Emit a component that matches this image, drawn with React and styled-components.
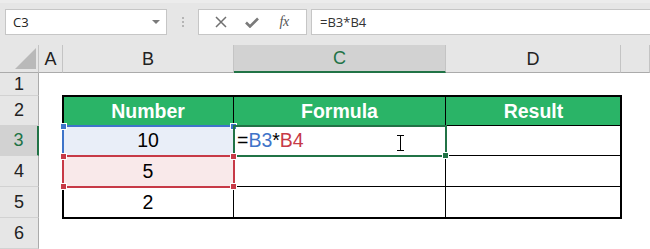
import React from "react";
import styled, { createGlobalStyle, css } from "styled-components";

const GlobalStyle = createGlobalStyle`
  html, body {
    margin: 0;
    padding: 0;
    background: #e6e6e6;
    overflow: hidden;
  }
  body {
    font-family: "Liberation Sans", Arial, sans-serif;
  }
`;

const GREEN = "#217346";
const BLUE = "#3f74c9";
const RED = "#c73a47";

const Window = styled.div`
  width: 650px;
  height: 249px;
  display: flex;
  flex-direction: column;
  background: #e6e6e6;
  overflow: hidden;
`;

/* ---------- formula bar ---------- */

const Toolbar = styled.div`
  height: 45px;
  box-sizing: border-box;
  display: flex;
  align-items: flex-start;
  padding: 6px 0 0 5px;
  border-top: 3px solid #ececec;
`;

const NameBox = styled.div`
  width: 162px;
  height: 26px;
  box-sizing: border-box;
  background: #fff;
  border: 1px solid #c6c6c6;
  display: flex;
  align-items: center;
  justify-content: space-between;
  padding: 0 6px 0 7px;
  font-family: "Open Sans", "Liberation Sans", sans-serif;
  font-size: 13px;
  color: #222;
`;

const Caret = styled.span`
  width: 0;
  height: 0;
  border-left: 4px solid transparent;
  border-right: 4px solid transparent;
  border-top: 4px solid #7a7a7a;
`;

const Grip = styled.div`
  width: 31px;
  height: 26px;
  display: flex;
  flex-direction: column;
  align-items: center;
  justify-content: center;
  gap: 2px;

  span {
    width: 2px;
    height: 2px;
    background: #b5b5b5;
  }
`;

const ButtonGroup = styled.div`
  width: 109px;
  height: 26px;
  box-sizing: border-box;
  background: #fff;
  border: 1px solid #c6c6c6;
  display: flex;
  align-items: center;
  justify-content: space-around;
  padding: 0 6px;
`;

const IconButton = styled.span`
  width: 24px;
  display: flex;
  align-items: center;
  justify-content: center;
`;

const Fx = styled.span`
  font-family: "Liberation Serif", "Times New Roman", serif;
  font-style: italic;
  font-size: 14px;
  color: #555;
  letter-spacing: -0.5px;
`;

const FormulaInput = styled.div`
  flex: 1;
  height: 26px;
  margin-left: 4px;
  box-sizing: border-box;
  background: #fff;
  border: 1px solid #c6c6c6;
  border-right: none;
  display: flex;
  align-items: center;
  padding-left: 8px;
  font-family: "Open Sans", "Liberation Sans", sans-serif;
  font-size: 13px;
  color: #333;
`;

/* ---------- sheet ---------- */

const Sheet = styled.div`
  flex: 1;
  display: grid;
  grid-template-columns: 39px 24px 171px 212px 175px 1fr;
  grid-template-rows: 28px 23px 30px 30px 31px 31px 1fr;
  background: #fff;
  font-family: "Liberation Sans", Arial, sans-serif;
`;

const Corner = styled.div`
  background: #e6e6e6;
  border-right: 1px solid #c4c4c4;
  border-bottom: 1px solid #ababab;
  box-sizing: border-box;
  display: flex;
  align-items: flex-end;
  justify-content: flex-end;
  padding: 0 2px 3px 0;
`;

const ColHeader = styled.div`
  background: #e6e6e6;
  box-sizing: border-box;
  border-right: 1px solid #c4c4c4;
  border-bottom: 1px solid #ababab;
  display: flex;
  align-items: center;
  justify-content: center;
  font-size: 18px;
  color: #222;
  padding-top: 1px;

  ${(p) =>
    p.$active &&
    css`
      background: #d2d2d2;
      color: ${GREEN};
      border-bottom: 2px solid ${GREEN};
    `}
`;

const RowHeader = styled.div`
  grid-column: 1;
  background: #e6e6e6;
  box-sizing: border-box;
  border-right: 1px solid #ababab;
  border-bottom: 1px solid #d2d2d2;
  display: flex;
  align-items: center;
  justify-content: center;
  font-size: 18px;
  color: #222;

  ${(p) =>
    p.$active &&
    css`
      background: #d2d2d2;
      color: ${GREEN};
      border-right: 2px solid ${GREEN};
    `}
`;

const Blank = styled.div`
  background: #fff;
  grid-column: ${(p) => p.$col || "auto"};
  grid-row: ${(p) => p.$row || "auto"};
`;

const Table = styled.div`
  grid-column: 3 / 6;
  grid-row: 3 / 7;
  display: grid;
  grid-template-columns: 171px 212px 175px;
  grid-template-rows: 30px 30px 31px 31px;
  position: relative;

  &::after {
    content: "";
    position: absolute;
    inset: -1px;
    border: 2px solid #000;
    pointer-events: none;
    z-index: 1;
  }
`;

const Cell = styled.div`
  position: relative;
  box-sizing: border-box;
  border-right: ${(p) => (p.$lastCol ? "none" : "1px solid #000")};
  border-bottom: ${(p) => (p.$lastRow ? "none" : "1px solid #000")};
  display: flex;
  align-items: center;
  justify-content: ${(p) => (p.$left ? "flex-start" : "center")};
  padding-left: ${(p) => (p.$left ? "3px" : "0")};
  background: ${(p) => p.$fill || "#fff"};
  font-size: 19.5px;
  color: #000;
`;

const HeadCell = styled(Cell)`
  background: #2ab467;
  color: #fff;
  font-weight: bold;
  padding-top: 2px;
`;

const Range = styled.div`
  position: absolute;
  top: -1px;
  left: -1px;
  right: -2px;
  bottom: -2px;
  border: 2px solid ${(p) => p.$color};
  z-index: ${(p) => p.$z};
  pointer-events: none;
`;

const Handle = styled.span`
  position: absolute;
  width: 5px;
  height: 5px;
  background: ${(p) => p.$color};
  border: 1px solid #fff;
  ${(p) => (p.$top ? "top: -4px;" : "bottom: -4px;")}
  ${(p) => (p.$leftSide ? "left: -4px;" : "right: -4px;")}
`;

const Ref = styled.span`
  color: ${(p) => p.$color};
`;

const Cursor = styled.svg`
  position: absolute;
  left: 162px;
  top: 9px;
  z-index: 5;
`;

export default function App() {
  return (
    <>
      <GlobalStyle />
      <Window>
        <Toolbar>
          <NameBox>
            C3
            <Caret />
          </NameBox>
          <Grip>
            <span />
            <span />
            <span />
          </Grip>
          <ButtonGroup>
            <IconButton>
              <svg width="12" height="12" viewBox="0 0 12 12">
                <path d="M1 1 L11 11 M11 1 L1 11" stroke="#707070" strokeWidth="1.5" fill="none" />
              </svg>
            </IconButton>
            <IconButton>
              <svg width="14" height="11" viewBox="0 0 14 11">
                <path d="M1 5.5 L5 9.5 L13 1.5" stroke="#7a7a7a" strokeWidth="2.6" fill="none" />
              </svg>
            </IconButton>
            <IconButton>
              <Fx>fx</Fx>
            </IconButton>
          </ButtonGroup>
          <FormulaInput>=B3*B4</FormulaInput>
        </Toolbar>

        <Sheet>
          <Corner>
            <svg width="21" height="21" viewBox="0 0 21 21">
              <polygon points="0,21 21,21 21,0" fill="#b9b9b9" />
            </svg>
          </Corner>
          <ColHeader>A</ColHeader>
          <ColHeader>B</ColHeader>
          <ColHeader $active>C</ColHeader>
          <ColHeader>D</ColHeader>
          <ColHeader />

          <RowHeader>1</RowHeader>
          <Blank $col="2 / 7" />

          <RowHeader>2</RowHeader>
          <Blank />
          <Table>
            <HeadCell>Number</HeadCell>
            <HeadCell>Formula</HeadCell>
            <HeadCell $lastCol>Result</HeadCell>

            <Cell $fill="#e9eef8">
              10
              <Range $color={BLUE} $z={2}>
                <Handle $color={BLUE} $top $leftSide />
                <Handle $color={BLUE} $top />
              </Range>
            </Cell>
            <Cell $left>
              =<Ref $color={BLUE}>B3</Ref>*<Ref $color={RED}>B4</Ref>
              <Range $color={GREEN} $z={3}>
                <Handle $color={GREEN} />
              </Range>
              <Cursor width="9" height="16" viewBox="0 0 9 16">
                <path d="M1 0.5 H8 M1 15.5 H8 M4.5 0.5 V15.5" stroke="#000" strokeWidth="1" fill="none" />
              </Cursor>
            </Cell>
            <Cell $lastCol />

            <Cell $fill="#f9e9ea">
              5
              <Range $color={RED} $z={4}>
                <Handle $color={RED} $top $leftSide />
                <Handle $color={RED} $top />
                <Handle $color={RED} $leftSide />
                <Handle $color={RED} />
              </Range>
            </Cell>
            <Cell />
            <Cell $lastCol />

            <Cell $lastRow>2</Cell>
            <Cell $lastRow />
            <Cell $lastRow $lastCol />
          </Table>
          <Blank $col="6" $row="3 / 7" />

          <RowHeader $active>3</RowHeader>
          <Blank />
          <RowHeader>4</RowHeader>
          <Blank />
          <RowHeader>5</RowHeader>
          <Blank />
          <RowHeader>6</RowHeader>
          <Blank $col="2 / 7" />
        </Sheet>
      </Window>
    </>
  );
}
